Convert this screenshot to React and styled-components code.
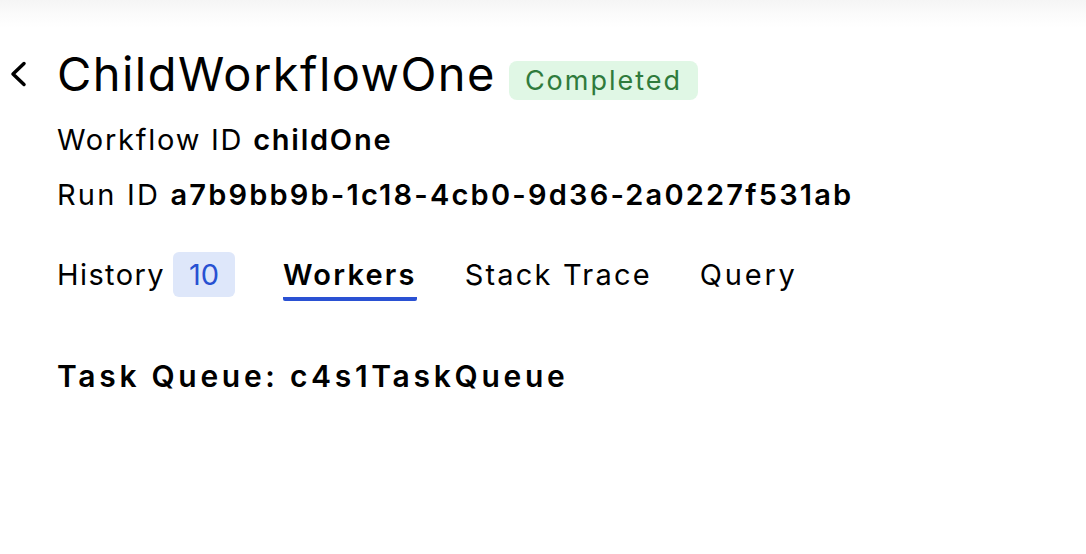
import styled, { createGlobalStyle } from 'styled-components'

const GlobalStyle = createGlobalStyle`
  html, body {
    margin: 0;
    padding: 0;
    background: #ffffff;
  }
  body {
    font-family: Inter, "Noto Sans", "DejaVu Sans", sans-serif;
    color: #000000;
  }
`

const tabs = [
  { label: 'History', count: 10, spacing: 1.4 },
  { label: 'Workers', active: true, spacing: 2.2 },
  { label: 'Stack Trace', spacing: 2.2 },
  { label: 'Query', spacing: 2.8 },
]

function App () {
  return (
    <Page>
      <GlobalStyle />
      <TopShade />
      <Header>
        <BackButton aria-label="back">
          <svg width="18" height="26" viewBox="0 0 18 26" fill="none">
            <path d="M15 2.5 L4 13 L15 23.5" stroke="#000" strokeWidth="3.5" strokeLinecap="round" strokeLinejoin="round" />
          </svg>
        </BackButton>
        <Title>ChildWorkflowOne</Title>
        <StatusBadge>Completed</StatusBadge>
      </Header>

      <Meta>
        <MetaLine $spacing={1.75}>Workflow ID <strong>childOne</strong></MetaLine>
        <MetaLine $spacing={2.2}>Run ID <strong>a7b9bb9b-1c18-4cb0-9d36-2a0227f531ab</strong></MetaLine>
      </Meta>

      <TabBar>
        {tabs.map((tab) => (
          <Tab key={tab.label}>
            <TabLabel $active={tab.active} $spacing={tab.spacing}>{tab.label}</TabLabel>
            {tab.count !== undefined && <CountBadge>{tab.count}</CountBadge>}
          </Tab>
        ))}
      </TabBar>

      <QueueTitle>Task Queue: c4s1TaskQueue</QueueTitle>
    </Page>
  )
}

export default App

const Page = styled.div`
  width: 100%;
  min-height: 554px;
  background: #fff;
`

const TopShade = styled.div`
  height: 28px;
  background: linear-gradient(to bottom, #f5f5f5 0%, #fbfbfb 50%, #ffffff 100%);
`

const Header = styled.div`
  display: flex;
  align-items: flex-start;
  margin-top: 22px;
  padding-left: 9px;
`

const BackButton = styled.button`
  display: flex;
  align-items: center;
  justify-content: center;
  width: 18px;
  height: 26px;
  margin-top: 11px;
  margin-right: 30px;
  padding: 0;
  border: 0;
  background: transparent;
  cursor: pointer;
`

const Title = styled.h1`
  margin: 0;
  font-size: 47px;
  line-height: 48px;
  font-weight: 400;
  letter-spacing: 1.45px;
`

const StatusBadge = styled.span`
  display: inline-flex;
  align-items: center;
  height: 39px;
  margin-top: 11px;
  margin-left: 13px;
  padding: 0 16px;
  border-radius: 8px;
  background: #e0f7e5;
  color: #2f7b3c;
  font-size: 27px;
  letter-spacing: 2px;
`

const Meta = styled.div`
  margin-top: 12px;
  padding-left: 57px;
`

const MetaLine = styled.div`
  font-size: 29px;
  line-height: 55px;
  letter-spacing: ${(p) => p.$spacing}px;

  strong {
    font-weight: 600;
  }
`

const TabBar = styled.div`
  display: flex;
  align-items: flex-start;
  gap: 48px;
  margin-top: 30px;
  padding-left: 57px;
`

const Tab = styled.div`
  display: flex;
  align-items: center;
  gap: 8px;
  cursor: pointer;
`

const TabLabel = styled.span`
  display: block;
  font-size: 29px;
  line-height: 45px;
  font-weight: ${(p) => (p.$active ? 600 : 400)};
  letter-spacing: ${(p) => p.$spacing}px;
  border-bottom: 4px solid ${(p) => (p.$active ? '#2a51d3' : 'transparent')};
  border-radius: 0 0 2px 2px;
  margin-bottom: -4px;
`

const CountBadge = styled.span`
  display: inline-flex;
  align-items: center;
  height: 45px;
  padding: 0 16px;
  border-radius: 6px;
  background: #dee7fa;
  color: #2751d2;
  font-size: 29px;
`

const QueueTitle = styled.h2`
  margin: 57px 0 0;
  padding-left: 57px;
  font-size: 30px;
  line-height: 45px;
  font-weight: 600;
  letter-spacing: 3.7px;
`
